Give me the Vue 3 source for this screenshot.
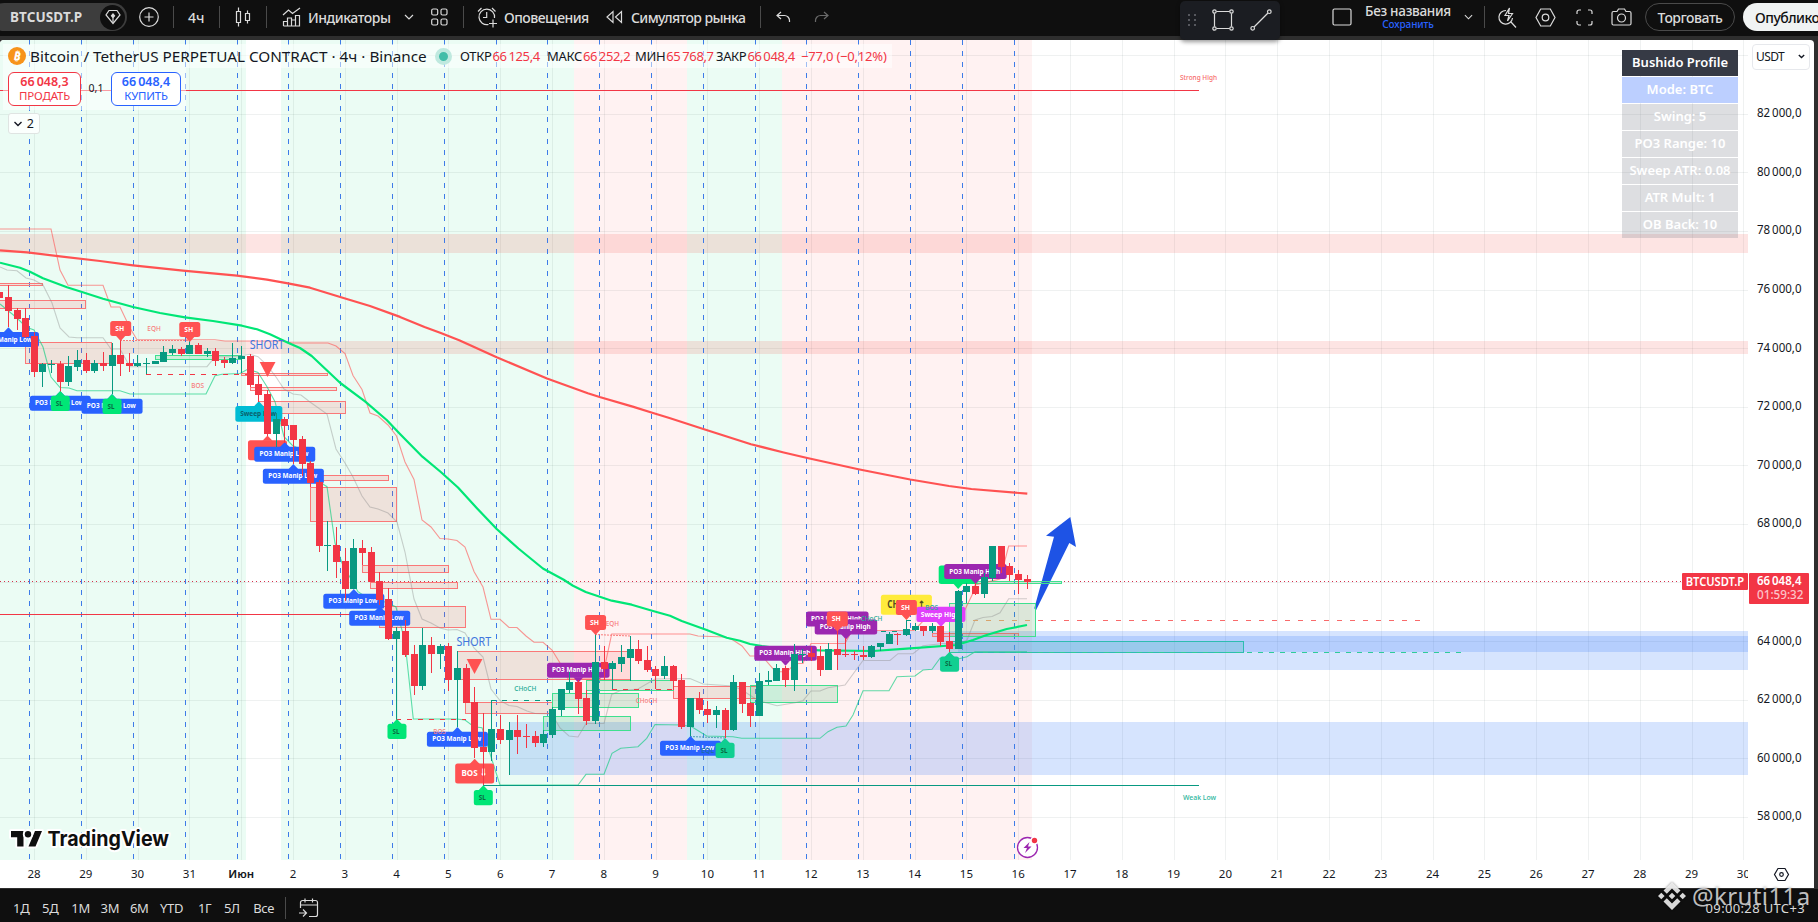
<script setup>
const DAY = 51.8
const barX = (k) => 34.35 + 8.634 * k
const snap = (v) => Math.floor(v) + 0.5

// bar index starts at -4: [high, bodyTop, bodyBottom, low, up]
const rawBars = [
  [292, 292, 298, 298, 0], [285, 297, 311, 327, 0], [308, 310, 319, 330, 0], [308, 318, 337, 338, 0],
  [332, 336, 372, 377, 0], [363, 364, 372, 387, 1], [360, 364, 365, 373, 1], [361, 364, 382, 392, 0],
  [356, 366, 382, 386, 1], [350, 360, 367, 371, 1], [353, 360, 371, 373, 0], [360, 363, 371, 373, 1],
  [352, 363, 366, 371, 0], [343, 355, 366, 394, 1], [340, 355, 364, 376, 0], [353, 363, 366, 372, 0],
  [355, 363, 366, 367, 1], [358, 363, 364, 374, 1], [361, 361, 364, 364, 1], [346, 352, 362, 362, 1],
  [345, 349, 353, 355, 1], [347, 349, 354, 356, 0], [341, 345, 354, 354, 1], [343, 345, 354, 354, 0],
  [348, 351, 354, 357, 1], [348, 351, 361, 366, 0], [357, 360, 363, 368, 0], [343, 358, 363, 364, 1],
  [346, 356, 359, 373, 1], [354, 356, 385, 387, 0], [375, 384, 395, 402, 0], [390, 394, 434, 436, 0],
  [413, 419, 434, 447, 1], [417, 419, 426, 443, 0], [425, 425, 440, 464, 0], [436, 439, 464, 476, 0],
  [461, 463, 483, 487, 0], [480, 482, 546, 552, 0], [521, 545, 546, 571, 1], [527, 545, 562, 578, 0],
  [548, 561, 589, 601, 0], [539, 548, 589, 589, 1], [540, 548, 553, 565, 0], [547, 552, 582, 582, 0],
  [572, 581, 600, 605, 0], [588, 599, 639, 640, 0], [627, 631, 639, 719, 1], [620, 631, 655, 657, 0],
  [645, 654, 686, 695, 0], [628, 645, 686, 690, 1], [637, 645, 654, 673, 0], [644, 646, 654, 669, 1],
  [643, 646, 680, 691, 0], [651, 668, 680, 727, 1], [664, 668, 703, 703, 0], [687, 702, 748, 758, 0],
  [713, 747, 752, 785, 0], [700, 729, 752, 761, 1], [715, 729, 740, 744, 0], [722, 730, 740, 775, 1],
  [715, 730, 737, 754, 0], [724, 736, 737, 748, 0], [731, 736, 743, 747, 0], [730, 734, 743, 747, 1],
  [707, 709, 735, 738, 1], [689, 689, 710, 716, 1], [672, 682, 690, 693, 1], [680, 682, 699, 714, 0],
  [690, 698, 721, 725, 0], [634, 662, 721, 724, 1], [646, 662, 669, 680, 0], [661, 663, 669, 689, 1],
  [645, 657, 664, 672, 1], [636, 649, 658, 681, 1], [640, 649, 661, 664, 0], [646, 660, 670, 672, 0],
  [666, 669, 676, 689, 0], [656, 666, 676, 679, 1], [665, 666, 681, 690, 0], [674, 680, 727, 729, 0],
  [698, 698, 727, 736, 1], [692, 698, 710, 714, 0], [701, 709, 715, 723, 0], [706, 710, 715, 728, 1],
  [708, 710, 730, 738, 0], [675, 682, 730, 731, 1], [682, 682, 704, 713, 0], [702, 703, 716, 727, 0],
  [673, 681, 716, 716, 1], [671, 680, 682, 685, 1], [664, 668, 681, 681, 1], [666, 668, 680, 687, 0],
  [644, 654, 680, 691, 1], [649, 654, 655, 663, 1], [647, 653, 657, 661, 0], [646, 656, 670, 676, 0],
  [643, 649, 670, 670, 1], [630, 649, 655, 670, 0], [638, 654, 655, 657, 0], [651, 654, 655, 660, 0],
  [646, 655, 657, 660, 0], [645, 646, 657, 658, 1], [643, 643, 647, 651, 1], [632, 634, 644, 644, 1],
  [633, 634, 635, 645, 0], [620, 629, 635, 636, 1], [623, 626, 630, 631, 1], [626, 626, 631, 636, 0],
  [623, 626, 631, 633, 1], [626, 626, 642, 646, 0], [632, 641, 649, 653, 0], [590, 591, 649, 649, 1],
  [583, 586, 592, 603, 1], [583, 586, 594, 595, 0], [573, 577, 594, 598, 1], [546, 546, 578, 581, 1],
  [546, 546, 567, 573, 0], [563, 566, 575, 581, 0], [570, 574, 580, 594, 0], [575, 579, 582, 589, 0],
]
const bars = rawBars.map(([h, t, b, l, up], i) => ({
  x: Math.floor(barX(i - 4)),
  h, t, b, l,
  color: up ? '#089981' : '#f23645',
}))

const dayLabels = ['28', '29', '30', '31', 'Июн', '2', '3', '4', '5', '6', '7', '8', '9', '10', '11', '12', '13', '14', '15', '16', '17', '18', '19', '20', '21', '22', '23', '24', '25', '26', '27', '28', '29', '30']
const days = dayLabels.map((t, i) => ({ t, x: 34.5 + DAY * i }))
const sessions = Array.from({ length: 20 }, (_, i) => snap(29.85 + DAY * i))

const prices = [84, 82, 80, 78, 76, 74, 72, 70, 68, 66, 64, 62, 60, 58].map((p, i) => ({
  t: `${p}\u2009000,0`,
  y: 55.7 + 58.58 * i,
  label: p !== 84 && p !== 66,
}))

const regimes = [
  [0, 246, '#ebfcf4'], [281, 293, '#ebfcf4'], [574, 113, '#fff2f2'], [687, 95, '#ebfcf4'], [782, 250, '#fff2f2'],
]

const redBoxes = [
  [-5, 283, 42, 285], [-5, 300, 85, 308], [25, 342, 111, 363], [241, 373, 327, 375], [250, 387, 336, 390],
  [258, 401, 345, 413], [302, 475, 388, 480], [310, 487, 396, 521], [362, 565, 448, 572], [370, 582, 457, 588],
  [379, 606, 465, 627], [457, 651, 630, 679], [465, 702, 552, 713], [673, 686, 758, 698], [932, 633, 1018, 636],
]
const greenBoxes = [
  [155, 355, 241, 359], [586, 680, 673, 690], [552, 693, 638, 707], [543, 716, 630, 730], [750, 685, 837, 702],
  [949, 603, 1035, 636], [975, 581, 1061, 583],
]

const upperBand = '0,229 51,229 60,270 68,285.3 103,285.3 111,307 120,307 130,328 137,339.7 215,339.7 225,341 283,341 292,343 328,343 336,346 345,353.5 353,375.5 362,389.5 370,413 378,416 388,425 396.5,436 405,462 414,479.5 422,520 431,527 440,538.5 448,539 457,540.5 465,547 474,571.5 483,587 491,619.3 500,619.3 509,627.5 517,627.5 526,636 534,642.3 543,642.3 552,650 560,663 568,679 600,679 604,670 611.7,634 690,634 698,636 725,637 733,640 742,646 750,656 762,656 775.5,671.7 787,671.7 795,663.5 803,663.5 811,643.5 845,643.5 852,630.5 914,630.5 925,619 960,620 973,593 975,585 1000,579 1008.7,546 1027,546'
const midBand = '0,267 7,270 17,270.7 26,278 34,280 43,285 52,303 60,328 69,337 77,337.7 103,337.7 111,349 120,349 130,366.7 207,366.7 215,356.7 233,356.7 250,354.3 258,356.7 267,365 276,377 284,389 293,394 301,395 310,402 327,414 336,449 345,463 353,477 362,496 370,507 378,509 388,513 397,522 405,552 414,599 422,619 431,623 440,628 448,630 457,629.5 465,633 474,648 483,657 491,689 500,700.5 509,705.5 517,706.5 527,711 535,713.5 552,714 560,728 569,736 578,737 586,723.5 604,723.5 611.7,694.5 620,690.7 638,689 655,679 690,678.5 703,684 733,686 742,690 758,700.5 777,705.7 795,702.7 803,700.7 811,691 820,691 828,687.7 845,685 863,660.5 890,660.5 898,653.7 913,653.7 923,645.7 943,643.5 960,643.5 967,640 975,620 983,617.5 992,616.5 1000,612.7 1008.7,598.7 1027,598.7'
const lowerBand = '0,304 17,318 26,327 34,330 43,347 51,377 60,387.5 69,388 77,390.7 120,390.7 130,394 206,394 215,375.7 222,374.3 240,373.5 248,369 258,372.5 267,386.7 275,401.7 284,436.7 292,445 301,450 310,463 319,481.7 327,486.7 335,543 342,563 358,591.7 363,595 388,603 396,607 405,642 413.3,719 457,719 465,720 474,726.7 482,727.7 492,760 500,785 578,785 586,774.3 604,774.3 612,753.3 620.7,748.3 638,746.7 646.7,738.3 655,724.5 681.7,725 691.7,726.7 706.7,736 733,736.7 741.7,738.3 820,738.3 828,731.7 837,727.3 846,726 853,715 863,690.7 889,690.7 897,676.7 915,676 923,670 932,669.3 940,658.3 958,659 967,656.7 975,651.7 1027,651.7'
const slowMa = '0,250.3 27,252.3 60,256.3 100,261 133,265.3 183,270.7 237,275.7 267,279.7 288,283.3 310,287.7 341,297.3 370,306 400,316.9 424.5,327 440.8,333 459.2,340.3 496.7,357.3 547,378.5 587.8,393.2 599.6,397 632.7,406.6 651.4,412.5 669.4,418 703.3,429 751,444.2 783.7,452.5 807.3,458 858.4,469.2 910.2,479.5 949,486 971.4,489 1027.3,493.7'
const fastMa = '0,262.7 20,267.7 30,271.7 43,278.3 67,287.3 82,292 103,298.7 133,307 160,313 185,317.3 213,321 242,325.7 257,329.3 270,334.3 288,342.7 300,348 311.7,356 340.3,383 365,401.3 386.7,420 400,434 422.4,456.7 440.8,472 458,487.5 476.7,508 496.7,529 518.4,548.5 542.9,568.5 563.3,579.5 573,585.7 585.7,592 611.7,600.7 631.7,604.7 653,611 670,615.7 681.7,621 706.7,630 726.7,637.7 740,640.7 750,644 762,646 780,648.5 820,650.3 873,651 906.7,648.7 956.7,645 973,640 986.7,635 1006.7,629 1027,625'

const RED = '#f23645'
const TEAL = '#089981'
// [x1, y1, x2, y2, color, dash]
const levels = [
  [0, 90.5, 1199, 90.5, RED, ''],
  [0, 614.5, 380, 614.5, RED, ''],
  [483, 785.5, 1199, 785.5, TEAL, ''],
  [120, 340.5, 189, 340.5, '#fa7b7b', '2 1'],
  [3, 342.5, 34, 342.5, RED, '5 6'],
  [146, 374.5, 250, 374.5, RED, '5 6'],
  [396, 719.5, 466, 719.5, RED, '5 6'],
  [491, 700.5, 552, 700.5, TEAL, '5 6'],
  [595, 634.5, 630, 636, '#fa7b7b', '2 1'],
  [612, 689.5, 674, 689.5, RED, '5 6'],
  [690, 736.5, 725, 738, '#4fa3b5', '2 1'],
  [837, 631.5, 899, 631.5, TEAL, '5 6'],
  [906, 620.5, 950, 620.5, TEAL, '5 6'],
  [947, 620.5, 1037, 620.5, '#d8a46c', '5 8'],
  [1038, 620.5, 1425, 620.5, '#f96a6a', '5 8'],
  [950, 652.5, 1467, 652.5, '#2ecc9a', '5 6'],
]

const BLUE = '#2962ff'
const PURPLE = '#9c27b0'
function tag(k, tip, w, h, fill, text = '', opt = {}) {
  const up = !opt.down
  const x = barX(k)
  const y = up ? tip + 4.7 : tip - 5 - h
  const base = up ? y + 0.5 : y + h - 0.5
  return {
    x, y, w, h, fill, text,
    left: x - w / 2,
    arrow: `${x - 5},${base} ${x + 5},${base} ${x},${tip}`,
    color: opt.color || '#fff',
    size: opt.size || 7,
    tw: opt.tw || 0,
  }
}
const low = (k, tip) => tag(k, tip, 61, 15, BLUE, 'PO3 Manip Low', { tw: 49 })
const high = (k, tip) => tag(k, tip, 62.5, 15, PURPLE, 'PO3 Manip High', { tw: 51, down: true })
const tags = [
  tag(27, 435.5, 39, 20, '#ff5252'),
  tag(107, 589, 39, 18.5, '#00e676', '', { down: true }),
  tag(26, 401.3, 47, 15.7, '#00bcd4', 'Sweep Low', { color: '#0b5f6c', tw: 36 }),
  low(-3, 327.3), low(3, 391), low(9, 394), low(29, 442), low(30, 464), low(37, 589),
  low(40, 606), low(49, 727), low(76, 736),
  high(63, 682.7), high(87, 665.7), high(93, 631.5), high(94, 639.5), high(109, 584),
  tag(101, 619.7, 51, 20, '#ffeb3b', 'CHoCH ↥', { down: true, color: '#4f4c22', size: 10, tw: 37 }),
  tag(105, 627, 49, 15.3, '#e040fb', 'Sweep High', { down: true, tw: 39 }),
  tag(51, 758.7, 39, 20, '#ff5252', 'BOS ⇓', { size: 9.5, tw: 25 }),
]
const sh = (k, tip) => tag(k, tip, 21, 15, '#ff5252', 'SH', { down: true, tw: 9 })
const sl = (k, tip, fill = '#00e676') => tag(k, tip, 19, 15.3, fill, 'SL', { color: '#0a6a43', tw: 7 })
const swings = [
  sh(10, 341), sh(18, 342), sh(65, 635), sh(93, 631.5), sh(101, 620),
  sl(3, 391), sl(9, 394), sl(42, 719), sl(52, 785.3), sl(80, 738, '#10cf91'), sl(106, 651.7, '#10cf91'),
]

// [text, x, centerY, width, color]
const notes = [
  ['Strong High', 1180, 77.7, 37, '#f76b6b'],
  ['Weak Low', 1183, 797.5, 33, '#2bb59c'],
  ['EQH', 147.3, 328.7, 13.5, '#f77c7c'],
  ['BOS', 191.3, 385.7, 12.7, '#f77c7c'],
  ['BOS', 433.3, 731.7, 12.5, '#f77c7c'],
  ['CHoCH', 514.3, 688.7, 22, '#27ab95'],
  ['EQH', 605.7, 623.7, 13.3, '#f77c7c'],
  ['CHoCH', 635.7, 700.3, 21.7, '#f77c7c'],
  ['CHoCH', 860.7, 618.7, 21.7, '#27ab95'],
  ['BOS', 925.3, 607.7, 12.7, '#27ab95'],
  ['EQL', 701.3, 750.7, 12.7, '#1c6f9c'],
]

const profile = [
  ['Bushido Profile', 'head'], ['Mode: BTC', 'mode'], ['Swing: 5', ''], ['PO3 Range: 10', ''],
  ['Sweep ATR: 0.08', ''], ['ATR Mult: 1', ''], ['OB Back: 10', ''],
]

const ohlc = [
  ['ОТКР', '66\u2009125,4', 'o1'], ['МАКС', '66\u2009252,2', 'o2'],
  ['МИН', '65\u2009768,7', 'o3'], ['ЗАКР', '66\u2009048,4', 'o4'],
]

const ranges = ['1Д', '5Д', '1М', '3М', '6М', 'YTD', '1Г', '5Л', 'Все']
</script>

<template>
  <div class="app">
    <header class="topbar">
      <div class="symbol">
        <span class="symbol-name">BTCUSDT.P</span>
        <span class="symbol-badge">
          <svg width="18" height="18" viewBox="0 0 18 18" class="ico">
            <path d="M5 2.5h8L16 7l-7 8.5L2 7z" />
            <path class="solid" d="M9 5L11.300 7.800 9.600 10v4.500H8.400V10L6.700 7.800z" />
          </svg>
        </span>
      </div>
      <svg class="ico add" width="20" height="20" viewBox="0 0 20 20">
        <circle cx="10" cy="10" r="9.300" /><path d="M10 5.500v9M5.500 10h9" />
      </svg>
      <i class="sep s1"></i>
      <span class="interval">4ч</span>
      <i class="sep s2"></i>
      <svg class="ico bars" width="16" height="22" viewBox="0 0 16 22">
        <path d="M1.500 5.500h4v11h-4zM3.500 1.500v4M3.500 16.500v4M10.500 7.500h4v7h-4zM12.500 4.500v3M12.500 14.500v3" />
      </svg>
      <i class="sep s3"></i>
      <svg class="ico indic" width="20" height="20" viewBox="0 0 20 20">
        <path d="M1 8l5.500-5 4 3.500L18 1M1.500 19v-4.500h4V19M5.500 19v-8h4v8M9.500 19v-6h4v6M13.500 19V8.500h4V19zM1.500 19h16" />
      </svg>
      <span class="t-indic">Индикаторы</span>
      <svg class="ico chev1" width="10" height="6" viewBox="0 0 10 6"><path d="M1 1l4 4 4-4" /></svg>
      <svg class="ico grid4" width="17" height="18" viewBox="0 0 17 18">
        <rect x="0.700" y="1" width="6" height="6" rx="1.500" /><rect x="10" y="1" width="6" height="6" rx="1.500" />
        <rect x="0.700" y="11" width="6" height="6" rx="1.500" /><rect x="10" y="11" width="6" height="6" rx="1.500" />
      </svg>
      <i class="sep s4"></i>
      <svg class="ico alarm" width="21" height="22" viewBox="0 0 21 22">
        <path d="M11.500 18.500A7.800 7.800 0 1 1 17.500 12M9.700 6v5.500H6M1 5.500L4.500 2M15 2l3.500 3.500M16 13.500v8M12 17.500h8" />
      </svg>
      <span class="t-alert">Оповещения</span>
      <svg class="ico rewind" width="17" height="14" viewBox="0 0 17 14"><path d="M7 1.500v11L1 7zM15.500 1.500v11L9.500 7z" /></svg>
      <span class="t-replay">Симулятор рынка</span>
      <i class="sep s5"></i>
      <svg class="ico undo" width="15" height="12" viewBox="0 0 15 12"><path d="M5 1L1 4.500 5 8M1.500 4.500h7a5 5 0 0 1 5 5V11" /></svg>
      <svg class="ico redo" width="15" height="12" viewBox="0 0 15 12"><path d="M10 1l4 3.500L10 8M13.500 4.500h-7a5 5 0 0 0-5 5V11" /></svg>

      <div class="draw-panel">
        <svg class="grip" width="9" height="14" viewBox="0 0 9 14">
          <path d="M0 1h2v2H0zM6 1h2v2H6zM0 6h2v2H0zM6 6h2v2H6zM0 11h2v2H0zM6 11h2v2H6z" />
        </svg>
        <svg class="ico shape" width="22" height="22" viewBox="0 0 22 22">
          <path d="M4.500 2.500h13M4.500 19.500h13M2.500 4.500v13M19.500 4.500v13" />
          <circle cx="2.500" cy="2.500" r="1.700" /><circle cx="19.500" cy="2.500" r="1.700" />
          <circle cx="2.500" cy="19.500" r="1.700" /><circle cx="19.500" cy="19.500" r="1.700" />
        </svg>
        <svg class="ico trend" width="22" height="22" viewBox="0 0 22 22">
          <path d="M4 18L18 4" /><circle cx="2.700" cy="19.300" r="1.800" /><circle cx="19.300" cy="2.700" r="1.800" />
        </svg>
      </div>

      <svg class="ico layout" width="20" height="18" viewBox="0 0 20 18"><rect x="1" y="1" width="18" height="16" rx="1.500" /></svg>
      <div class="doc">
        <span class="doc-name">Без названия</span>
        <span class="doc-save">Сохранить</span>
      </div>
      <svg class="ico chev2" width="9" height="6" viewBox="0 0 10 6"><path d="M1 1l4 4 4-4" /></svg>
      <i class="sep s6"></i>
      <svg class="ico quick" width="19" height="21" viewBox="0 0 19 21">
        <path d="M8 3.500A6.800 6.800 0 1 0 14.500 11M13 15l5 5.500M11.500 1L7 8.500h4L9.500 14 14.500 6.500h-4z" />
      </svg>
      <svg class="ico gear" width="21" height="19" viewBox="0 0 21 19">
        <path d="M5.700 1h9.600l4.700 8.500-4.700 8.500H5.700L1 9.500z" /><circle cx="10.500" cy="9.500" r="3.300" />
      </svg>
      <svg class="ico full" width="17" height="17" viewBox="0 0 17 17">
        <path d="M1 5V3a2 2 0 0 1 2-2h2M12 1h2a2 2 0 0 1 2 2v2M16 12v2a2 2 0 0 1-2 2h-2M5 16H3a2 2 0 0 1-2-2v-2" />
      </svg>
      <svg class="ico cam" width="21" height="18" viewBox="0 0 21 18">
        <path d="M2.500 3.500H6L7.500 1h6L15 3.500h3.500a1.500 1.500 0 0 1 1.500 1.500v10.500a1.500 1.500 0 0 1-1.500 1.500h-16A1.500 1.500 0 0 1 1 15.500V5a1.500 1.500 0 0 1 1.500-1.500z" />
        <circle cx="10.500" cy="10" r="4" />
      </svg>
      <button class="btn trade">Торговать</button>
      <button class="btn publish">Опубликовать</button>
    </header>

    <main class="workspace">
      <svg class="chart" width="1814" height="848" viewBox="0 40 1814 848">
        <rect v-for="r in regimes" :key="r[0]" :x="r[0]" y="40" :width="r[1]" height="820" :fill="r[2]" />

        <g class="gridlines">
          <path v-for="(p, i) in prices" :key="'h' + i" :d="`M0 ${snap(p.y)}H1748`" />
          <path v-for="(d, i) in days" :key="'v' + i" :d="`M${snap(d.x)} 40V860`" />
        </g>

        <g class="supply">
          <rect x="0" y="234" width="1748" height="19" />
          <rect x="120" y="341" width="1628" height="13" />
        </g>
        <g class="demand">
          <rect x="838" y="631" width="910" height="39" />
          <rect x="958" y="636" width="790" height="16" />
          <rect x="509" y="722" width="1239" height="53" />
        </g>

        <path v-for="x in sessions" :key="x" class="session" :d="`M${x} 40V860`" />

        <path class="last-price" d="M0 581.5H1748" />

        <polygon class="arrow" points="1070.300,517 1046,535.700 1054,536.700 1034.300,608.300 1036,610.300 1069.300,543 1076,547" />

        <rect class="ext-box" x="949.500" y="641.500" width="294" height="11" />
        <rect
          v-for="(b, i) in redBoxes" :key="'rb' + i" class="red-box"
          :x="b[0] + 0.5" :y="b[1] + 0.5" :width="b[2] - b[0]" :height="b[3] - b[1]"
        />
        <rect
          v-for="(b, i) in greenBoxes" :key="'gb' + i" class="green-box"
          :x="b[0] + 0.5" :y="b[1] + 0.5" :width="b[2] - b[0]" :height="b[3] - b[1]"
        />

        <polyline class="band upper" :points="upperBand" />
        <polyline class="band mid" :points="midBand" />
        <polyline class="band lower" :points="lowerBand" />
        <polyline class="ma slow" :points="slowMa" />
        <polyline class="ma fast" :points="fastMa" />

        <path
          v-for="(l, i) in levels" :key="'l' + i"
          :d="`M${l[0]} ${l[1]}L${l[2]} ${l[3]}`" :stroke="l[4]" :stroke-dasharray="l[5]"
        />

        <g v-for="(t, i) in tags" :key="'t' + i">
          <rect :x="t.left" :y="t.y" :width="t.w" :height="t.h" rx="2.500" :fill="t.fill" />
          <polygon :points="t.arrow" :fill="t.fill" />
          <text
            v-if="t.text" class="tag-text" :x="t.x - t.tw / 2 - 0.700" :y="t.y + t.h / 2 + t.size * 0.32" :fill="t.color"
            :font-size="t.size" :textLength="t.tw" lengthAdjust="spacingAndGlyphs"
          >{{ t.text }}</text>
        </g>

        <g v-for="(b, i) in bars" :key="'b' + i" :fill="b.color">
          <rect :x="b.x" :y="b.h" width="1" :height="b.l - b.h" />
          <rect :x="b.x - 3" :y="b.t" width="7" :height="b.b - b.t" />
        </g>

        <g v-for="(t, i) in swings" :key="'s' + i">
          <rect :x="t.left" :y="t.y" :width="t.w" :height="t.h" rx="2.500" :fill="t.fill" />
          <polygon :points="t.arrow" :fill="t.fill" />
          <text
            class="tag-text" :x="t.x - t.tw / 2 - 1" :y="t.y + t.h / 2 + 2.300" :fill="t.color"
            font-size="7" :textLength="t.tw" lengthAdjust="spacingAndGlyphs"
          >{{ t.text }}</text>
        </g>

        <text
          v-for="(n, i) in notes" :key="'n' + i" class="note" :x="n[1]" :y="n[2] + 2.500" :fill="n[4]"
          :textLength="n[3]" lengthAdjust="spacingAndGlyphs"
        >{{ n[0] }}</text>
        <text class="short" x="249.700" y="349.300" textLength="34.500" lengthAdjust="spacingAndGlyphs">SHORT</text>
        <text class="short" x="456.500" y="646" textLength="34.700" lengthAdjust="spacingAndGlyphs">SHORT</text>
        <polygon class="short-mark" points="259.700,362 275.500,362 267.500,377" />
        <polygon class="short-mark" points="466.700,659 482.500,659 474.500,674" />

        <g class="event">
          <circle cx="1027.500" cy="847.500" r="10" />
          <path d="M1029.500 842l-6 6h3.500l-2 5 6.500-6.500h-3.500z" />
          <circle class="event-gap" cx="1034.500" cy="840.500" r="4" />
          <circle class="event-dot" cx="1034.500" cy="840.500" r="2.700" />
        </g>

        <!-- brand mark -->
        <g class="brand">
          <path d="M11 831h12.500v15.500h-6.300v-9.300H11zM35 831h7l-6.500 15.500h-7z" />
          <circle cx="28" cy="834.200" r="3.200" />
          <text x="47.500" y="846.300" textLength="121.500" lengthAdjust="spacingAndGlyphs">TradingView</text>
        </g>

        <!-- price axis -->
        <template v-for="(p, i) in prices" :key="'p' + i">
          <text v-if="p.label" class="axis" x="1757" :y="p.y + 3" textLength="44.500" lengthAdjust="spacingAndGlyphs">{{ p.t }}</text>
        </template>
        <rect x="1682" y="573" width="66" height="17" rx="1" fill="#f23645" />
        <text class="axis on" x="1685.700" y="586" textLength="58.500" lengthAdjust="spacingAndGlyphs">BTCUSDT.P</text>
        <rect x="1749" y="573" width="60" height="31" rx="1" fill="#f23645" />
        <text class="axis on" x="1757" y="585.300" textLength="44.500" lengthAdjust="spacingAndGlyphs">66&#8201;048,4</text>
        <text class="axis timer" x="1757" y="599.300" textLength="46.500" lengthAdjust="spacingAndGlyphs">01:59:32</text>

        <!-- time axis -->
        <svg x="0" y="860" width="1748" height="28" viewBox="0 860 1748 28">
          <text
            v-for="(d, i) in days" :key="'d' + i" class="axis day" :class="{ month: d.t === 'Июн' }"
            :x="d.x - 0.500" y="878"
          >{{ d.t }}</text>
        </svg>
        <path class="axis-gear" d="M1778 868.500h7l3.500 6-3.500 6h-7l-3.500-6z" />
        <circle class="axis-gear" cx="1781.500" cy="874.500" r="1.800" />
      </svg>

      <!-- legend -->
      <div class="legend">
        <svg class="coin" width="18" height="18" viewBox="0 0 18 18">
          <circle cx="9" cy="9" r="9" fill="#f7931a" />
          <text x="9.200" y="13.300" transform="rotate(12 9 9)">₿</text>
        </svg>
        <span class="title">Bitcoin / TetherUS PERPETUAL CONTRACT · 4ч · Binance</span>
        <span class="status"></span>
        <span v-for="o in ohlc" :key="o[0]" class="ohlc" :class="o[2]">{{ o[0] }}<b>{{ o[1] }}</b></span>
        <b class="delta">−77,0 (−0,12%)</b>
      </div>
      <div class="orders">
        <button class="order sell"><strong>66&#8201;048,3</strong><span>ПРОДАТЬ</span></button>
        <span class="spread">0,1</span>
        <button class="order buy"><strong>66&#8201;048,4</strong><span>КУПИТЬ</span></button>
      </div>
      <div class="collapse">
        <svg width="8" height="6" viewBox="0 0 8 6"><path d="M0.500 1L4 4.500 7.500 1" /></svg>
        <span>2</span>
      </div>

      <div class="profile">
        <div v-for="p in profile" :key="p[0]" class="profile-row" :class="p[1]">{{ p[0] }}</div>
      </div>
      <div class="currency">
        <span>USDT</span>
        <svg width="7" height="5" viewBox="0 0 7 5"><path d="M0.800 1l2.700 2.500L6.200 1" /></svg>
      </div>
    </main>

    <footer class="bottombar">
      <span v-for="(r, i) in ranges" :key="r" class="range" :class="'r' + i">{{ r }}</span>
      <i class="sep"></i>
      <svg class="ico goto" width="20" height="20" viewBox="0 0 20 20">
        <path d="M1.500 10V4.500a2 2 0 0 1 2-2h13a2 2 0 0 1 2 2v12a2 2 0 0 1-2 2H10M1.500 7h17M6 0.500v4M13.500 0.500v4M0 15h7M4 11.500L7.500 15 4 18.500" />
      </svg>
      <span class="clock">09:00:28 UTC+3</span>
    </footer>

    <div class="watermark">
      <svg width="28" height="28" viewBox="0 0 28 28">
        <path d="M14 0l8.500 8.500-3.300 3.300L14 6.600 8.800 11.800 5.500 8.500zM14 28l-8.500-8.500 3.300-3.300 5.200 5.200 5.200-5.200 3.300 3.300zM3.300 10.700L6.600 14l-3.300 3.300L0 14zM24.700 10.700L28 14l-3.300 3.300-3.300-3.300zM14 10.700l3.300 3.300-3.300 3.300-3.300-3.300z" />
      </svg>
      <span>@kruti11a</span>
    </div>
  </div>
</template>

<style>
body {
  margin: 0;
  background: #2e2e2e;
  overflow: hidden;
}
</style>

<style scoped>
.app {
  position: relative;
  width: 1818px;
  height: 922px;
  display: flex;
  flex-direction: column;
  overflow: hidden;
  background: #2e2e2e;
  color: #dbdbdb;
  font-family: 'Noto Sans', 'Open Sans', sans-serif;
  font-stretch: 87.5%;
}

button {
  font-family: inherit;
  font-stretch: inherit;
  cursor: pointer;
}

.ico {
  flex: none;
  fill: none;
  stroke: #dbdbdb;
  stroke-width: 1.2;
}

.ico .solid {
  fill: #dbdbdb;
  stroke: none;
}

/* Top bar */
.topbar {
  flex: none;
  height: 36px;
  margin-bottom: 4px;
  display: flex;
  align-items: center;
  padding-bottom: 2px;
  box-sizing: border-box;
  background: #0f0f0f;
  font-size: 14px;
  font-weight: 500;
  white-space: nowrap;
}

.topbar > span {
  flex: none;
}

.symbol {
  flex: none;
  width: 137px;
  height: 28px;
  margin-left: -10px;
  box-sizing: border-box;
  padding: 0 2px 0 20px;
  display: flex;
  align-items: center;
  justify-content: space-between;
  border-radius: 14px;
  background: #3d3d3d;
}

.symbol-name {
  font-size: 13.5px;
  font-weight: 700;
  letter-spacing: 0.1px;
}

.symbol-badge {
  flex: none;
  width: 25px;
  height: 25px;
  display: flex;
  align-items: center;
  justify-content: center;
  border-radius: 50%;
  background: #0f0f0f;
}

.sep {
  flex: none;
  width: 1px;
  height: 22px;
  background: #4a4a4a;
}

.add { margin-left: 12px; }
.s1 { margin-left: 14px; }
.interval { margin-left: 14px; width: 17px; }
.s2 { margin-left: 14px; }
.bars { margin-left: 15px; }
.s3 { margin-left: 15px; }
.indic { margin-left: 15px; }
.t-indic { margin-left: 6px; width: 80px; letter-spacing: -0.45px; }
.chev1 { margin-left: 16px; }
.grid4 { margin-left: 17px; }
.s4 { margin-left: 15px; }
.alarm { margin-left: 13px; }
.t-alert { margin-left: 6px; width: 82px; letter-spacing: -0.55px; }
.rewind { margin-left: 20px; }
.t-replay { margin-left: 8px; width: 116px; letter-spacing: -0.6px; }
.s5 { margin-left: 13px; }
.undo { margin-left: 15px; }
.redo { margin-left: 23px; stroke: #6a6a6a; }

.draw-panel {
  flex: none;
  align-self: flex-start;
  width: 100px;
  height: 39px;
  margin: 1px 0 -6px 351px;
  box-sizing: border-box;
  padding: 0 8px 6px 8px;
  display: flex;
  align-items: center;
  border-radius: 5px;
  background: #1b1d22;
  box-shadow: 0 2px 4px rgba(0, 0, 0, 0.4);
  z-index: 2;
}

.grip { fill: #56585e; margin-top: 5px; }
.shape { margin: 5px 0 0 15px; }
.trend { margin: 5px 0 0 16px; }

.layout { margin-left: 52px; }

.doc {
  flex: none;
  width: 86px;
  margin-left: 13px;
  display: flex;
  flex-direction: column;
  align-items: center;
}

.doc-name {
  font-size: 13.5px;
  line-height: 14px;
  letter-spacing: -0.3px;
}

.doc-save {
  font-size: 10px;
  line-height: 12px;
  letter-spacing: -0.1px;
  color: #2962ff;
}

.chev2 { margin-left: 13px; }
.s6 { margin-left: 11px; }
.quick { margin-left: 13px; }
.gear { margin-left: 18px; }
.full { margin-left: 20px; }
.cam { margin-left: 18px; }

.btn {
  flex: none;
  height: 28px;
  border-radius: 14px;
  box-sizing: border-box;
  font-size: 14px;
  font-weight: 500;
  letter-spacing: -0.5px;
}

.trade {
  width: 90px;
  margin-left: 13px;
  padding: 0;
  border: 1px solid #4a4a4a;
  background: transparent;
  color: #dbdbdb;
}

.publish {
  width: 120px;
  margin-left: 8px;
  padding: 0 0 0 12px;
  border: none;
  background: #f0f3f3;
  color: #0f0f0f;
  text-align: left;
}

/* Chart */
.workspace {
  flex: none;
  position: relative;
  width: 1814px;
  height: 848px;
  background: #fff;
  border-radius: 4px 4px 0 0;
  overflow: hidden;
  color: #131722;
}

.chart {
  display: block;
  fill: none;
}

.gridlines path { stroke: rgba(30, 50, 50, 0.07); }
.supply rect { fill: rgba(244, 67, 54, 0.14); }
.demand rect { fill: rgba(50, 120, 250, 0.2); }
.session { stroke: #3d7be8; stroke-dasharray: 5 6; }
.last-price { stroke: #d5304c; stroke-dasharray: 1 3; }
.arrow { fill: #1e53e5; }
.red-box { fill: rgba(255, 82, 82, 0.15); stroke: #fa7878; }
.green-box { fill: rgba(40, 170, 90, 0.16); stroke: #3fe08f; }
.ext-box { fill: rgba(90, 190, 200, 0.3); stroke: #2dbdb0; }

.band { stroke-width: 1.1; }
.upper { stroke: #ff5252; stroke-opacity: 0.6; }
.mid { stroke: #8a8a8a; stroke-opacity: 0.4; }
.lower { stroke: #10cc80; stroke-opacity: 0.65; }
.ma { stroke-width: 2.2; stroke-linejoin: round; }
.slow { stroke: #ff5252; }
.fast { stroke: #00e676; }

.tag-text { font-weight: 700; }
.note { font-size: 7px; font-weight: 500; }
.short { font-size: 12.5px; fill: #3f76dd; }
.short-mark { fill: #ff5252; }

.event circle { fill: #fff; stroke: #9c27b0; stroke-width: 1.3; }
.event path { fill: #9c27b0; }
.event .event-gap { fill: #fff; stroke: none; }
.event .event-dot { fill: #f23645; stroke: none; }

.brand {
  fill: #0f0f0f;
  stroke: #fff;
  stroke-width: 4;
  stroke-linejoin: round;
  paint-order: stroke;
}

.brand text {
  font-family: Inter, sans-serif;
  font-size: 20.5px;
  font-weight: 700;
}

.axis { font-size: 12px; fill: #131722; }
.axis.on { fill: #fff; font-weight: 600; }
.axis.timer { fill: #fcc4c9; font-weight: 500; }
.axis.day { font-size: 11.5px; text-anchor: middle; }
.axis.month { font-weight: 600; }
.axis-gear { stroke: #131722; stroke-width: 1.2; }

.legend {
  position: absolute;
  top: 4px;
  left: 3px;
  width: 889px;
  height: 24px;
  box-sizing: border-box;
  padding-left: 5px;
  display: flex;
  align-items: center;
  background: rgba(255, 255, 255, 0.5);
  font-size: 13px;
  white-space: nowrap;
}

.coin { flex: none; }
.coin text { fill: #fff; font-size: 12px; font-weight: 700; text-anchor: middle; }

.title {
  flex: none;
  width: 400px;
  margin-left: 4px;
  font-size: 15.3px;
}

.status {
  flex: none;
  width: 9px;
  height: 9px;
  margin-left: 5px;
  border: 4.5px solid #bfe9df;
  border-radius: 50%;
  background: #42bda8;
}

.ohlc { flex: none; letter-spacing: -0.35px; }
.ohlc b { color: #f23645; font-weight: 400; margin-left: 1px; }
.o1 { width: 87px; margin-left: 8px; }
.o2 { width: 88px; }
.o3 { width: 81px; }
.o4 { width: 85px; }
.delta { color: #f23645; font-weight: 400; letter-spacing: -0.2px; }

.orders {
  position: absolute;
  top: 28px;
  left: 3px;
  width: 183px;
  height: 42px;
  box-sizing: border-box;
  padding: 4px 5px;
  display: flex;
  align-items: flex-start;
  background: rgba(255, 255, 255, 0.5);
}

.order {
  flex: none;
  height: 34px;
  box-sizing: border-box;
  padding: 0;
  display: flex;
  flex-direction: column;
  align-items: center;
  justify-content: center;
  border: 1px solid;
  border-radius: 6px;
  background: #fff;
  font-size: 11.5px;
  line-height: 14px;
  letter-spacing: -0.2px;
}

.order strong { font-size: 12.5px; font-weight: 600; letter-spacing: 0; }
.sell { width: 73px; color: #f23645; }
.buy { width: 70px; color: #2962ff; }
.spread { flex: none; width: 30px; padding-top: 8px; text-align: center; font-size: 10.5px; line-height: 16px; }

.collapse {
  position: absolute;
  top: 73px;
  left: 8px;
  width: 32px;
  height: 21px;
  box-sizing: border-box;
  padding: 0 5px;
  display: flex;
  align-items: center;
  justify-content: space-between;
  border: 1px solid #dfe4e2;
  border-radius: 3px;
  background: #fbfffd;
  font-size: 12.5px;
}

.collapse svg,
.currency svg {
  fill: none;
  stroke: #131722;
  stroke-width: 1.4;
}

.profile {
  position: absolute;
  top: 10px;
  left: 1622px;
  width: 116px;
  display: grid;
  grid-auto-rows: 26px;
  row-gap: 1px;
  font-size: 13px;
  font-weight: 600;
  line-height: 25px;
  text-align: center;
  white-space: nowrap;
  color: #fff;
}

.profile-row { background: rgba(120, 123, 134, 0.25); }
.profile-row.mode { background: #bccfff; }
.profile-row.head { background: #363a45; }

.currency {
  position: absolute;
  top: 4px;
  left: 1752px;
  width: 58px;
  height: 26px;
  box-sizing: border-box;
  padding: 0 4px 2px 3px;
  display: flex;
  align-items: center;
  justify-content: space-between;
  border: 1px solid #e6e8ec;
  border-radius: 4px;
  background: #fff;
  font-size: 12px;
  letter-spacing: -0.6px;
}

/* Bottom bar */
.bottombar {
  flex: none;
  height: 34px;
  display: flex;
  align-items: center;
  box-sizing: border-box;
  padding: 4px 13px 0 13px;
  background: #0f0f0f;
  border-top: 1px solid #2e2e2e;
  font-size: 13px;
  white-space: nowrap;
}

.range { flex: none; width: 29.3px; letter-spacing: -0.3px; }
.r0 { width: 29px; }
.r4 { width: 30px; }
.r5 { width: 38px; }
.r6 { width: 26px; }
.r8 { width: 32px; }
.goto { margin-left: 13px; }
.clock { margin-left: auto; letter-spacing: 0.35px; }

.watermark {
  position: absolute;
  left: 1658px;
  top: 880px;
  display: flex;
  align-items: center;
  color: rgba(240, 240, 240, 0.8);
  font-size: 24px;
  line-height: 32px;
  letter-spacing: 0.4px;
  text-shadow: 0 0 3px rgba(0, 0, 0, 0.5);
}

.watermark svg {
  fill: rgba(240, 240, 240, 0.9);
  margin-right: 6px;
  filter: drop-shadow(0 0 1px rgba(0, 0, 0, 0.5));
}
</style>
